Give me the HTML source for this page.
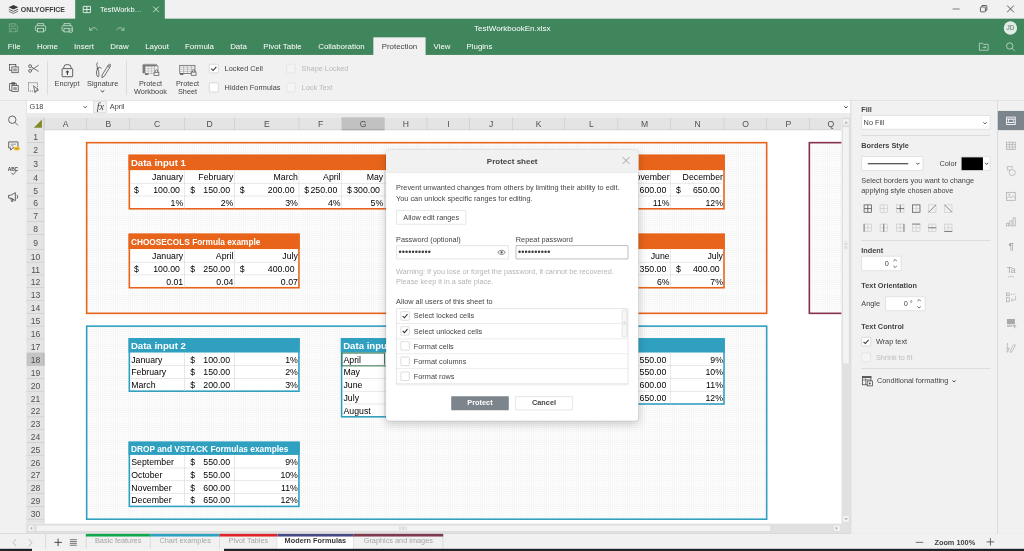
<!DOCTYPE html>
<html lang="en"><head><meta charset="utf-8"><title>TestWorkbookEn.xlsx - Protect sheet</title>
<style>
html,body{margin:0;padding:0;background:#f1f1f1;overflow:hidden;width:1024px;height:551px}
#stage{position:absolute;left:0;top:0;width:1920px;height:1036px;transform:scale(0.5333333);transform-origin:0 0;overflow:hidden;font-family:"Liberation Sans",sans-serif;background:#f1f1f1}
#stage div,#stage svg{position:absolute;box-sizing:border-box}
#stage svg{overflow:visible}
#stage{filter:opacity(1)}
</style></head><body><div id="stage">
<div style="left:0px;top:0px;width:1920px;height:35.01px;background:#f1f1f1"></div>
<svg style="left:13.12px;top:5.62px;" width="26.25" height="24.38" viewBox="7 3 14 13"><path d="M13.5 4.7L18.4 7 13.5 9.3 8.6 7z" fill="#3a3a3a"/><g fill="none" stroke="#3a3a3a" stroke-width="0.8"><path d="M8.9 9.1l4.6 2.1 4.6-2.1"/><path d="M8.9 11.1l4.6 2.1 4.6-2.1" stroke="#555"/></g></svg>
<div style="font-size:14.25px;line-height:19.95px;color:#3a3a3a;white-space:nowrap;font-weight:bold;left:39.38px;top:7.84px;height:19.95px;transform:scaleX(.915);transform-origin:0 50%">ONLYOFFICE</div>
<div style="left:140.62px;top:0px;width:168.75px;height:35.62px;background:#40865c"></div>
<svg style="left:155.44px;top:10.69px;" width="15.75" height="13.69" viewBox="0 0 16 14"><g fill="none" stroke="#fff" stroke-width="1.5"><rect x="1" y="1" width="14" height="12" rx="0.3"/><path d="M1 7h14M8 1v12"/></g></svg>
<div style="font-size:13.74px;line-height:19.24px;color:#fff;white-space:nowrap;left:187.5px;top:8.38px;height:19.24px;">TestWorkb<span style="opacity:.7">…</span></div>
<svg style="left:285.94px;top:10.88px;" width="13.12" height="13.12" viewBox="0 0 10 10"><path d="M1 1l8 8M9 1l-8 8" stroke="#e6efe9" stroke-width="1.2" fill="none"/></svg>
<svg style="left:1786.12px;top:15px;" width="13.5" height="3.75" viewBox="0 0 10 2"><path d="M0 1h10" stroke="#777" stroke-width="1.3"/></svg>
<svg style="left:1836.75px;top:9.19px;" width="14.62" height="14.62" viewBox="0 0 11 11"><g fill="none" stroke="#4a4a4a" stroke-width="1.2"><rect x="1" y="3" width="7" height="7" rx="1"/><path d="M3 3V1.6Q3 1 3.6 1H9.4Q10 1 10 1.6V7.4Q10 8 9.4 8H8"/></g></svg>
<svg style="left:1887.38px;top:8.62px;" width="15.37" height="15.37" viewBox="0 0 11 11"><path d="M1 1l9 9M10 1l-9 9" stroke="#3a3a3a" stroke-width="1.1" fill="none"/></svg>
<div style="left:0px;top:34.69px;width:1920px;height:68.81px;background:#40865c"></div>
<svg style="left:15.37px;top:42.19px;opacity:.55" width="20.06" height="20.06" viewBox="0 0 20 20"><g stroke="#fff" stroke-opacity=".62" fill="none" stroke-width="1.3"><path d="M2.5 2.5h11l4 4v11h-15z"/><path d="M6 2.5v5h7v-5M5.5 17.5v-6h9v6"/></g></svg>
<svg style="left:56.25px;top:35.62px;" width="187.5" height="33.75" viewBox="30 19 100 18"><g stroke="#fff" fill="none" stroke-width="0.75" stroke-opacity=".78">
<path d="M37.5 25.5v-2.1h6.3v2.1"/>
<rect x="35.5" y="25.5" width="10.3" height="5.2" rx="1.3"/>
<rect x="37.5" y="28.1" width="6.3" height="3.6" fill="#40865c" fill-opacity="1"/>
<path d="M64.1 25.5v-2.1h6.3v2.1"/>
<rect x="62.1" y="25.5" width="10.3" height="5.2" rx="1.3"/>
<rect x="64.1" y="28.1" width="5.2" height="3.6" fill="#40865c"/>
<circle cx="70.9" cy="30.4" r="1.9" fill="#40865c"/>
<path d="M70 30.4l0.7 0.7 1.2-1.3" stroke-width="0.6"/>
</g>
<g stroke="#fff" fill="none" stroke-width="0.95" stroke-opacity=".5">
<path d="M89.6 27.1l0.2 3.1 3-0.5"/><path d="M90.2 29.8Q93.6 25 97.5 29.8"/>
<path d="M124.3 27.1l-0.2 3.1-3-0.5"/><path d="M123.7 29.8Q120.3 25 116.4 29.8"/>
</g></svg>
<div style="font-size:15px;line-height:21px;color:#fff;white-space:nowrap;left:773.06px;width:375px;text-align:center;top:42.75px;height:21px;">TestWorkbookEn.xlsx</div>
<div style="left:1881.56px;top:40.31px;width:25.12px;height:25.12px;background:#e3ede7;border-radius:50%"></div>
<div style="font-size:12.19px;line-height:17.06px;color:#7c9a89;white-space:nowrap;font-weight:bold;left:1875.56px;width:37.5px;text-align:center;top:44.34px;height:17.06px;letter-spacing:-0.2px">JD</div>
<div style="left:699.94px;top:69.75px;width:98.25px;height:34.69px;background:#f1f1f1"></div>
<div style="font-size:14.81px;line-height:20.74px;color:#fff;white-space:nowrap;left:-48.38px;width:150px;text-align:center;top:76.63px;height:20.74px;">File</div>
<div style="font-size:14.81px;line-height:20.74px;color:#fff;white-space:nowrap;left:14.06px;width:150px;text-align:center;top:76.63px;height:20.74px;">Home</div>
<div style="font-size:14.81px;line-height:20.74px;color:#fff;white-space:nowrap;left:82.5px;width:150px;text-align:center;top:76.63px;height:20.74px;">Insert</div>
<div style="font-size:14.81px;line-height:20.74px;color:#fff;white-space:nowrap;left:149.06px;width:150px;text-align:center;top:76.63px;height:20.74px;">Draw</div>
<div style="font-size:14.81px;line-height:20.74px;color:#fff;white-space:nowrap;left:219.38px;width:150px;text-align:center;top:76.63px;height:20.74px;">Layout</div>
<div style="font-size:14.81px;line-height:20.74px;color:#fff;white-space:nowrap;left:299.06px;width:150px;text-align:center;top:76.63px;height:20.74px;">Formula</div>
<div style="font-size:14.81px;line-height:20.74px;color:#fff;white-space:nowrap;left:372.19px;width:150px;text-align:center;top:76.63px;height:20.74px;">Data</div>
<div style="font-size:14.81px;line-height:20.74px;color:#fff;white-space:nowrap;left:454.69px;width:150px;text-align:center;top:76.63px;height:20.74px;">Pivot Table</div>
<div style="font-size:14.81px;line-height:20.74px;color:#fff;white-space:nowrap;left:565.31px;width:150px;text-align:center;top:76.63px;height:20.74px;">Collaboration</div>
<div style="font-size:14.81px;line-height:20.74px;color:#444;white-space:nowrap;left:674.06px;width:150px;text-align:center;top:76.63px;height:20.74px;">Protection</div>
<div style="font-size:14.81px;line-height:20.74px;color:#fff;white-space:nowrap;left:753.75px;width:150px;text-align:center;top:76.63px;height:20.74px;">View</div>
<div style="font-size:14.81px;line-height:20.74px;color:#fff;white-space:nowrap;left:824.06px;width:150px;text-align:center;top:76.63px;height:20.74px;">Plugins</div>
<svg style="left:1833.38px;top:76.12px;" width="23.25" height="22.12" viewBox="0 0 20 20"><g stroke="#fff" stroke-opacity=".7" fill="none" stroke-width="1.3"><path d="M2.5 4.5h5l2 2h8v10h-15z"/><path d="M8 11.5h5.5M11.5 9.5l2 2-2 2"/></g></svg>
<svg style="left:1883.62px;top:76.69px;" width="21.75" height="21.75" viewBox="0 0 20 20"><g stroke="#fff" stroke-opacity=".7" fill="none" stroke-width="1.4"><circle cx="8.5" cy="8.5" r="5.5"/><path d="M12.5 12.5l5 5"/></g></svg>
<div style="left:0px;top:103.5px;width:1920px;height:85.22px;background:#f1f1f1;border-bottom:1px solid #cbcbcb"></div>
<svg style="left:0px;top:105px;" width="90" height="82.5" viewBox="0 56 48 44"><g stroke="#444" fill="none" stroke-width="0.75">
<rect x="9.5" y="64.4" width="6.3" height="5.8"/>
<rect x="11.9" y="66.9" width="6.3" height="5.8" fill="#f1f1f1"/>
<rect x="13.3" y="68.4" width="3.5" height="2.9" fill="#9a9a9a" stroke="none"/>
<circle cx="30.1" cy="66.1" r="1.45"/><circle cx="30.1" cy="70.9" r="1.45"/>
<path d="M31.3 66.9L38.6 71.4M31.3 70.1L38.6 65.2"/>
<path d="M11.6 83.6H9.5V90.4H11.9"/><path d="M11.7 82.7h3.2v1.5h-3.2z" fill="#666"/><path d="M14.8 83.6h1.6v1.6"/>
<rect x="11.9" y="85.5" width="6.3" height="6.1" fill="#f1f1f1"/>
<rect x="13.3" y="87.1" width="3.5" height="3" fill="#9a9a9a" stroke="none"/>
<rect x="28.5" y="82.7" width="9" height="8.4" stroke-dasharray="1.1 0.9" stroke-width="0.7"/>
<path d="M33.6 85.8l4.9 4.2-2.3.3-1.1 2.4z" fill="#f1f1f1" stroke-width="0.7"/>
</g></svg>
<div style="left:88.69px;top:114.38px;width:1.03px;height:64.12px;background:#cbcbcb"></div>
<svg style="left:105px;top:108.75px;" width="45" height="41.25" viewBox="56 58 24 22"><g stroke="#444" fill="none" stroke-width="0.85">
<path d="M63.7 68.3V67.4A3.7 3.1 0 0 1 71.1 67.4V68.3"/>
<rect x="62.1" y="68.5" width="10.6" height="8.1" rx="0.6"/>
<path d="M67.4 71.2V74.8" stroke-width="1.1"/><path d="M65.9 72l1.5-1.6 1.5 1.6z" fill="#444" stroke-width="0.5"/>
</g></svg>
<div style="font-size:13.74px;line-height:19.24px;color:#444444;white-space:nowrap;left:69.38px;width:112.5px;text-align:center;top:147.88px;height:19.24px;">Encrypt</div>
<svg style="left:172.5px;top:108.75px;" width="45" height="41.25" viewBox="92 58 24 22"><g stroke="#444" fill="none" stroke-width="0.75">
<path d="M97.3 62.3Q95.6 63.2 97.2 67.6Q98.9 72 98.7 75.3Q98.4 77.3 97.2 76.4Q95.7 74.6 96.4 70.8Q96.9 68.4 99.3 67.2L101.3 68.2"/>
<path d="M96.3 68.6l2.6-1.2"/>
<path d="M108.3 64.6l2 1.2-6.3 10.4-2.4 1.3.3-2.7z"/>
<path d="M107.4 66l2 1.2M109.1 63.9l1.6 1"/>
</g></svg>
<div style="font-size:13.74px;line-height:19.24px;color:#444444;white-space:nowrap;left:136.31px;width:112.5px;text-align:center;top:147.88px;height:19.24px;">Signature</div>
<svg style="left:188.44px;top:168px;" width="8.62" height="6" viewBox="0 0 8 5"><path d="M1 1l3 3 3-3" stroke="#333" fill="none" stroke-width="1.7"/></svg>
<div style="left:236.81px;top:114.38px;width:1.03px;height:64.12px;background:#cbcbcb"></div>
<svg style="left:262.5px;top:108.75px;" width="41.25" height="41.25" viewBox="140 58 22 22"><g stroke="#555" fill="none" stroke-width="0.7">
<path d="M142.4 65.1l1.4-0.9h12.3l1.6 1.6v6.5" stroke="#777"/>
<path d="M142.3 64.5h13.6l1.9 1.7h-12.9v6.9h-2.6z" fill="#7a7a7a" stroke="none"/>
<rect x="144.9" y="66.2" width="9.6" height="6.9" fill="#f6f6f6" stroke="#8a8a8a" stroke-width="0.5"/>
<path d="M144.9 68.5h9.6M144.9 70.8h9.6M148.1 66.2v6.9M151.3 66.2v6.9" stroke="#a8a8a8" stroke-width="0.5"/>
<path d="M144.7 73.9h3.4" stroke="#444" stroke-width="1.3"/>
<rect x="153.8" y="72.2" width="4.8" height="3.2" fill="#f1f1f1" stroke="#666" stroke-width="0.8"/>
<path d="M154.9 72.1v-1.2q0-1.2 1.3-1.2q1.3 0 1.3 1.2v1.2" stroke="#666" stroke-width="0.8"/>
</g></svg>
<div style="font-size:13.74px;line-height:19.24px;color:#444444;white-space:nowrap;left:225.94px;width:112.5px;text-align:center;top:147.88px;height:19.24px;">Protect</div>
<div style="font-size:13.74px;line-height:19.24px;color:#444444;white-space:nowrap;left:225.94px;width:112.5px;text-align:center;top:161.75px;height:19.24px;">Workbook</div>
<svg style="left:331.88px;top:108.75px;" width="41.25" height="41.25" viewBox="177 58 22 22"><g stroke="#555" fill="none" stroke-width="0.7">
<rect x="179.7" y="65.2" width="15.2" height="8.1" fill="#f6f6f6"/>
<path d="M179.7 67.1h15.2M179.7 69.2h15.2M179.7 71.3h15.2" stroke="#a0a0a0" stroke-width="0.5"/>
<path d="M183.6 65.2v8.1M187.4 65.2v8.1M191.2 65.2v8.1" stroke="#8a8a8a" stroke-width="0.5"/>
<path d="M179.9 74h3.4" stroke="#444" stroke-width="1.3"/>
<rect x="191.2" y="72" width="4.8" height="3.2" fill="#f1f1f1" stroke="#666" stroke-width="0.8"/>
<path d="M192.3 71.9v-1.2q0-1.2 1.3-1.2q1.3 0 1.3 1.2v1.2" stroke="#666" stroke-width="0.8"/>
</g></svg>
<div style="font-size:13.74px;line-height:19.24px;color:#444444;white-space:nowrap;left:295.31px;width:112.5px;text-align:center;top:147.88px;height:19.24px;">Protect</div>
<div style="font-size:13.74px;line-height:19.24px;color:#444444;white-space:nowrap;left:295.31px;width:112.5px;text-align:center;top:161.75px;height:19.24px;">Sheet</div>
<div style="left:392.44px;top:120px;width:17.49px;height:17.49px;background:#fff;border:1px solid #c0c0c0;border-radius:2px"></div>
<svg style="left:392.44px;top:120px;" width="17.49" height="17.49" viewBox="0 0 14 14"><path d="M3.3 7.1l2.7 2.7 4.9-5.6" stroke="#333" stroke-width="1.6" fill="none"/></svg>
<div style="font-size:13.74px;line-height:19.24px;color:#444444;white-space:nowrap;left:421.12px;top:119.57px;height:19.24px;">Locked Cell</div>
<div style="left:392.44px;top:155.06px;width:17.49px;height:17.49px;background:#fff;border:1px solid #c0c0c0;border-radius:2px"></div>
<div style="font-size:13.74px;line-height:19.24px;color:#444444;white-space:nowrap;left:421.12px;top:154.44px;height:19.24px;">Hidden Formulas</div>
<div style="left:536.81px;top:120px;width:17.49px;height:17.49px;background:#f4f4f4;border:1px solid #dcdcdc;border-radius:2px"></div>
<div style="font-size:13.74px;line-height:19.24px;color:#b8b8b8;white-space:nowrap;left:565.5px;top:119.57px;height:19.24px;">Shape Locked</div>
<div style="left:536.81px;top:155.06px;width:17.49px;height:17.49px;background:#f4f4f4;border:1px solid #dcdcdc;border-radius:2px"></div>
<div style="font-size:13.74px;line-height:19.24px;color:#b8b8b8;white-space:nowrap;left:565.5px;top:154.44px;height:19.24px;">Lock Text</div>
<div style="left:0px;top:188.72px;width:1920px;height:31.13px;background:#ebebeb"></div>
<div style="left:50.44px;top:189.19px;width:1543.69px;height:22.5px;background:#fff"></div>
<div style="left:174.56px;top:188.81px;width:26.62px;height:23.44px;background:#ebebeb"></div>
<div style="left:175.12px;top:188.81px;width:25.12px;height:23.44px;background:#f1f1f1;border:1px solid #d0d0d0"></div>
<div style="font-size:13.74px;line-height:19.24px;color:#444444;white-space:nowrap;left:55.31px;top:191.19px;height:19.24px;">G18</div>
<svg style="left:156px;top:198.38px;" width="7.88" height="5.62" viewBox="0 0 8 5"><path d="M1 1l3 3 3-3" stroke="#3a3a3a" fill="none" stroke-width="1.75"/></svg>
<div style="font-size:19.12px;line-height:26.77px;color:#444;white-space:nowrap;font-family:&quot;Liberation Serif&quot;,serif;left:174.94px;width:26.25px;text-align:center;top:187.24px;height:26.77px;font-style:italic;letter-spacing:-0.2px">fx</div>
<div style="font-size:13.74px;line-height:19.24px;color:#444444;white-space:nowrap;left:205.88px;top:191.19px;height:19.24px;">April</div>
<svg style="left:1581.56px;top:197.62px;" width="8.25" height="5.81" viewBox="0 0 8 5"><path d="M1 1l3 3 3-3" stroke="#3a3a3a" fill="none" stroke-width="1.75"/></svg>
<div style="left:0px;top:188.72px;width:50.06px;height:812.44px;background:#f1f1f1;border-right:1px solid #dcdcdc"></div>
<svg style="left:7.5px;top:210px;" width="37.5" height="180" viewBox="4 112 20 96"><g stroke="#444" fill="none" stroke-width="0.8">
<circle cx="12" cy="119.7" r="3.7"/><path d="M14.7 122.4l3 3"/>
<path d="M8.4 141.9h9.3v6h-5l-2.3 2.2v-2.2h-2z"/><path d="M10.4 144.2h5.4M10.4 145.9h3" stroke-width="0.5"/>
<rect x="13.9" y="146.9" width="5.5" height="3.5" fill="#f7c62c" stroke="none"/><path d="M15 148.7h3.3" stroke="#7a6a28" stroke-width="0.7"/>
<path d="M11 172.7l1.9 1.9 3.6-4.2"/>
<path d="M8.3 195.3h2.2l4.6-2.6v8l-4.6-2.6h-2.2z"/><path d="M10.5 198.2l0.8 3.2h1.5l-0.6-3"/><path d="M16.6 194.8Q18.3 196.8 16.6 198.8"/>
</g></svg>
<div style="font-size:9.19px;line-height:12.86px;color:#444;white-space:nowrap;font-weight:bold;left:5.44px;width:37.5px;text-align:center;top:311.01px;height:12.86px;letter-spacing:-0.3px">ABC</div>
<div style="left:50.49px;top:219.51px;width:1527.13px;height:762.81px;background:#fff"></div>
<div style="left:0;top:0;width:1577.62px;height:982.31px;overflow:hidden">
<div style="left:50.49px;top:219.51px;width:1527.13px;height:24px;background:#e4e4e4;border-bottom:1px solid #c6c6c6"></div>
<div style="left:50.49px;top:219.51px;width:32.06px;height:762.81px;background:#e4e4e4;border-right:1px solid #c6c6c6"></div>
<div style="left:641.01px;top:219.51px;width:80px;height:24px;background:#c1c1c1;border-bottom:1px solid #8a8a8a"></div>
<div style="left:50.49px;top:662.13px;width:32.06px;height:24px;background:#c4c4c4;border-right:1px solid #9a9a9a"></div>
<svg style="left:63.19px;top:224.06px;" width="15.94" height="15.37" viewBox="0 0 10 10"><path d="M10 0V10H0z" fill="#858a2a"/></svg>
<div style="left:162.01px;top:219.51px;width:1.03px;height:24px;background:#c6c6c6"></div>
<div style="font-size:16.12px;line-height:22.57px;color:#505050;white-space:nowrap;left:94.88px;width:56.25px;text-align:center;top:221.16px;height:22.57px;">A</div>
<div style="left:242.01px;top:219.51px;width:1.03px;height:24px;background:#c6c6c6"></div>
<div style="font-size:16.12px;line-height:22.57px;color:#505050;white-space:nowrap;left:174.88px;width:56.25px;text-align:center;top:221.16px;height:22.57px;">B</div>
<div style="left:345.01px;top:219.51px;width:1.03px;height:24px;background:#c6c6c6"></div>
<div style="font-size:16.12px;line-height:22.57px;color:#505050;white-space:nowrap;left:266.38px;width:56.25px;text-align:center;top:221.16px;height:22.57px;">C</div>
<div style="left:439.01px;top:219.51px;width:1.03px;height:24px;background:#c6c6c6"></div>
<div style="font-size:16.12px;line-height:22.57px;color:#505050;white-space:nowrap;left:364.88px;width:56.25px;text-align:center;top:221.16px;height:22.57px;">D</div>
<div style="left:560.01px;top:219.51px;width:1.03px;height:24px;background:#c6c6c6"></div>
<div style="font-size:16.12px;line-height:22.57px;color:#505050;white-space:nowrap;left:472.38px;width:56.25px;text-align:center;top:221.16px;height:22.57px;">E</div>
<div style="left:640.01px;top:219.51px;width:1.03px;height:24px;background:#c6c6c6"></div>
<div style="font-size:16.12px;line-height:22.57px;color:#505050;white-space:nowrap;left:572.88px;width:56.25px;text-align:center;top:221.16px;height:22.57px;">F</div>
<div style="left:720.01px;top:219.51px;width:1.03px;height:24px;background:#c6c6c6"></div>
<div style="font-size:16.12px;line-height:22.57px;color:#505050;white-space:nowrap;left:652.88px;width:56.25px;text-align:center;top:221.16px;height:22.57px;">G</div>
<div style="left:800.01px;top:219.51px;width:1.03px;height:24px;background:#c6c6c6"></div>
<div style="font-size:16.12px;line-height:22.57px;color:#505050;white-space:nowrap;left:732.88px;width:56.25px;text-align:center;top:221.16px;height:22.57px;">H</div>
<div style="left:880.01px;top:219.51px;width:1.03px;height:24px;background:#c6c6c6"></div>
<div style="font-size:16.12px;line-height:22.57px;color:#505050;white-space:nowrap;left:812.88px;width:56.25px;text-align:center;top:221.16px;height:22.57px;">I</div>
<div style="left:960.01px;top:219.51px;width:1.03px;height:24px;background:#c6c6c6"></div>
<div style="font-size:16.12px;line-height:22.57px;color:#505050;white-space:nowrap;left:892.88px;width:56.25px;text-align:center;top:221.16px;height:22.57px;">J</div>
<div style="left:1058.01px;top:219.51px;width:1.03px;height:24px;background:#c6c6c6"></div>
<div style="font-size:16.12px;line-height:22.57px;color:#505050;white-space:nowrap;left:981.88px;width:56.25px;text-align:center;top:221.16px;height:22.57px;">K</div>
<div style="left:1158.01px;top:219.51px;width:1.03px;height:24px;background:#c6c6c6"></div>
<div style="font-size:16.12px;line-height:22.57px;color:#505050;white-space:nowrap;left:1080.88px;width:56.25px;text-align:center;top:221.16px;height:22.57px;">L</div>
<div style="left:1257.01px;top:219.51px;width:1.03px;height:24px;background:#c6c6c6"></div>
<div style="font-size:16.12px;line-height:22.57px;color:#505050;white-space:nowrap;left:1180.38px;width:56.25px;text-align:center;top:221.16px;height:22.57px;">M</div>
<div style="left:1357.01px;top:219.51px;width:1.03px;height:24px;background:#c6c6c6"></div>
<div style="font-size:16.12px;line-height:22.57px;color:#505050;white-space:nowrap;left:1279.88px;width:56.25px;text-align:center;top:221.16px;height:22.57px;">N</div>
<div style="left:1437.01px;top:219.51px;width:1.03px;height:24px;background:#c6c6c6"></div>
<div style="font-size:16.12px;line-height:22.57px;color:#505050;white-space:nowrap;left:1369.88px;width:56.25px;text-align:center;top:221.16px;height:22.57px;">O</div>
<div style="left:1517.01px;top:219.51px;width:1.03px;height:24px;background:#c6c6c6"></div>
<div style="font-size:16.12px;line-height:22.57px;color:#505050;white-space:nowrap;left:1449.88px;width:56.25px;text-align:center;top:221.16px;height:22.57px;">P</div>
<div style="left:1597.01px;top:219.51px;width:1.03px;height:24px;background:#c6c6c6"></div>
<div style="font-size:16.12px;line-height:22.57px;color:#505050;white-space:nowrap;left:1529.88px;width:56.25px;text-align:center;top:221.16px;height:22.57px;">Q</div>
<div style="left:82.01px;top:219.51px;width:1.03px;height:24px;background:#c6c6c6"></div>
<div style="left:50.49px;top:267.13px;width:32.06px;height:1.03px;background:#c6c6c6"></div>
<div style="font-size:16.12px;line-height:22.57px;color:#505050;white-space:nowrap;left:50.87px;width:31.88px;text-align:center;top:245.77px;height:22.57px;">1</div>
<div style="left:50.49px;top:291.13px;width:32.06px;height:1.03px;background:#c6c6c6"></div>
<div style="font-size:16.12px;line-height:22.57px;color:#505050;white-space:nowrap;left:50.87px;width:31.88px;text-align:center;top:269.77px;height:22.57px;">2</div>
<div style="left:50.49px;top:319.13px;width:32.06px;height:1.03px;background:#c6c6c6"></div>
<div style="font-size:16.12px;line-height:22.57px;color:#505050;white-space:nowrap;left:50.87px;width:31.88px;text-align:center;top:295.77px;height:22.57px;">3</div>
<div style="left:50.49px;top:343.13px;width:32.06px;height:1.03px;background:#c6c6c6"></div>
<div style="font-size:16.12px;line-height:22.57px;color:#505050;white-space:nowrap;left:50.87px;width:31.88px;text-align:center;top:321.78px;height:22.57px;">4</div>
<div style="left:50.49px;top:367.13px;width:32.06px;height:1.03px;background:#c6c6c6"></div>
<div style="font-size:16.12px;line-height:22.57px;color:#505050;white-space:nowrap;left:50.87px;width:31.88px;text-align:center;top:345.78px;height:22.57px;">5</div>
<div style="left:50.49px;top:391.13px;width:32.06px;height:1.03px;background:#c6c6c6"></div>
<div style="font-size:16.12px;line-height:22.57px;color:#505050;white-space:nowrap;left:50.87px;width:31.88px;text-align:center;top:369.78px;height:22.57px;">6</div>
<div style="left:50.49px;top:415.13px;width:32.06px;height:1.03px;background:#c6c6c6"></div>
<div style="font-size:16.12px;line-height:22.57px;color:#505050;white-space:nowrap;left:50.87px;width:31.88px;text-align:center;top:393.78px;height:22.57px;">7</div>
<div style="left:50.49px;top:439.13px;width:32.06px;height:1.03px;background:#c6c6c6"></div>
<div style="font-size:16.12px;line-height:22.57px;color:#505050;white-space:nowrap;left:50.87px;width:31.88px;text-align:center;top:417.78px;height:22.57px;">8</div>
<div style="left:50.49px;top:467.13px;width:32.06px;height:1.03px;background:#c6c6c6"></div>
<div style="font-size:16.12px;line-height:22.57px;color:#505050;white-space:nowrap;left:50.87px;width:31.88px;text-align:center;top:443.78px;height:22.57px;">9</div>
<div style="left:50.49px;top:491.13px;width:32.06px;height:1.03px;background:#c6c6c6"></div>
<div style="font-size:16.12px;line-height:22.57px;color:#505050;white-space:nowrap;left:50.87px;width:31.88px;text-align:center;top:469.78px;height:22.57px;">10</div>
<div style="left:50.49px;top:515.13px;width:32.06px;height:1.03px;background:#c6c6c6"></div>
<div style="font-size:16.12px;line-height:22.57px;color:#505050;white-space:nowrap;left:50.87px;width:31.88px;text-align:center;top:493.78px;height:22.57px;">11</div>
<div style="left:50.49px;top:539.13px;width:32.06px;height:1.03px;background:#c6c6c6"></div>
<div style="font-size:16.12px;line-height:22.57px;color:#505050;white-space:nowrap;left:50.87px;width:31.88px;text-align:center;top:517.78px;height:22.57px;">12</div>
<div style="left:50.49px;top:563.13px;width:32.06px;height:1.03px;background:#c6c6c6"></div>
<div style="font-size:16.12px;line-height:22.57px;color:#505050;white-space:nowrap;left:50.87px;width:31.88px;text-align:center;top:541.78px;height:22.57px;">13</div>
<div style="left:50.49px;top:587.13px;width:32.06px;height:1.03px;background:#c6c6c6"></div>
<div style="font-size:16.12px;line-height:22.57px;color:#505050;white-space:nowrap;left:50.87px;width:31.88px;text-align:center;top:565.78px;height:22.57px;">14</div>
<div style="left:50.49px;top:611.13px;width:32.06px;height:1.03px;background:#c6c6c6"></div>
<div style="font-size:16.12px;line-height:22.57px;color:#505050;white-space:nowrap;left:50.87px;width:31.88px;text-align:center;top:589.78px;height:22.57px;">15</div>
<div style="left:50.49px;top:635.13px;width:32.06px;height:1.03px;background:#c6c6c6"></div>
<div style="font-size:16.12px;line-height:22.57px;color:#505050;white-space:nowrap;left:50.87px;width:31.88px;text-align:center;top:613.78px;height:22.57px;">16</div>
<div style="left:50.49px;top:661.13px;width:32.06px;height:1.03px;background:#c6c6c6"></div>
<div style="font-size:16.12px;line-height:22.57px;color:#505050;white-space:nowrap;left:50.87px;width:31.88px;text-align:center;top:638.78px;height:22.57px;">17</div>
<div style="left:50.49px;top:685.13px;width:32.06px;height:1.03px;background:#c6c6c6"></div>
<div style="font-size:16.12px;line-height:22.57px;color:#505050;white-space:nowrap;left:50.87px;width:31.88px;text-align:center;top:663.78px;height:22.57px;">18</div>
<div style="left:50.49px;top:709.13px;width:32.06px;height:1.03px;background:#c6c6c6"></div>
<div style="font-size:16.12px;line-height:22.57px;color:#505050;white-space:nowrap;left:50.87px;width:31.88px;text-align:center;top:687.78px;height:22.57px;">19</div>
<div style="left:50.49px;top:733.13px;width:32.06px;height:1.03px;background:#c6c6c6"></div>
<div style="font-size:16.12px;line-height:22.57px;color:#505050;white-space:nowrap;left:50.87px;width:31.88px;text-align:center;top:711.78px;height:22.57px;">20</div>
<div style="left:50.49px;top:757.13px;width:32.06px;height:1.03px;background:#c6c6c6"></div>
<div style="font-size:16.12px;line-height:22.57px;color:#505050;white-space:nowrap;left:50.87px;width:31.88px;text-align:center;top:735.78px;height:22.57px;">21</div>
<div style="left:50.49px;top:781.13px;width:32.06px;height:1.03px;background:#c6c6c6"></div>
<div style="font-size:16.12px;line-height:22.57px;color:#505050;white-space:nowrap;left:50.87px;width:31.88px;text-align:center;top:759.78px;height:22.57px;">22</div>
<div style="left:50.49px;top:805.13px;width:32.06px;height:1.03px;background:#c6c6c6"></div>
<div style="font-size:16.12px;line-height:22.57px;color:#505050;white-space:nowrap;left:50.87px;width:31.88px;text-align:center;top:783.78px;height:22.57px;">23</div>
<div style="left:50.49px;top:829.13px;width:32.06px;height:1.03px;background:#c6c6c6"></div>
<div style="font-size:16.12px;line-height:22.57px;color:#505050;white-space:nowrap;left:50.87px;width:31.88px;text-align:center;top:807.78px;height:22.57px;">24</div>
<div style="left:50.49px;top:853.13px;width:32.06px;height:1.03px;background:#c6c6c6"></div>
<div style="font-size:16.12px;line-height:22.57px;color:#505050;white-space:nowrap;left:50.87px;width:31.88px;text-align:center;top:831.78px;height:22.57px;">25</div>
<div style="left:50.49px;top:877.13px;width:32.06px;height:1.03px;background:#c6c6c6"></div>
<div style="font-size:16.12px;line-height:22.57px;color:#505050;white-space:nowrap;left:50.87px;width:31.88px;text-align:center;top:855.78px;height:22.57px;">26</div>
<div style="left:50.49px;top:901.13px;width:32.06px;height:1.03px;background:#c6c6c6"></div>
<div style="font-size:16.12px;line-height:22.57px;color:#505050;white-space:nowrap;left:50.87px;width:31.88px;text-align:center;top:879.78px;height:22.57px;">27</div>
<div style="left:50.49px;top:925.13px;width:32.06px;height:1.03px;background:#c6c6c6"></div>
<div style="font-size:16.12px;line-height:22.57px;color:#505050;white-space:nowrap;left:50.87px;width:31.88px;text-align:center;top:903.78px;height:22.57px;">28</div>
<div style="left:50.49px;top:949.13px;width:32.06px;height:1.03px;background:#c6c6c6"></div>
<div style="font-size:16.12px;line-height:22.57px;color:#505050;white-space:nowrap;left:50.87px;width:31.88px;text-align:center;top:927.78px;height:22.57px;">29</div>
<div style="left:50.49px;top:973.13px;width:32.06px;height:1.03px;background:#c6c6c6"></div>
<div style="font-size:16.12px;line-height:22.57px;color:#505050;white-space:nowrap;left:50.87px;width:31.88px;text-align:center;top:951.78px;height:22.57px;">30</div>
<div style="left:50.49px;top:997.13px;width:32.06px;height:1.03px;background:#c6c6c6"></div>
<div style="font-size:16.12px;line-height:22.57px;color:#505050;white-space:nowrap;left:50.87px;width:31.88px;text-align:center;top:975.78px;height:22.57px;clip-path:inset(0 0 13.75px 0);">31</div>
<div style="left:160.94px;top:266.06px;width:1278px;height:323px;background-color:#fff;background-image:linear-gradient(#f5f5f5 2px,transparent 2px),linear-gradient(90deg,#f5f5f5 2px,transparent 2px);background-size:4px 4px;background-clip:padding-box;border:3px solid #e8641b"></div>
<div style="left:160.94px;top:610.06px;width:1278px;height:365px;background-color:#fff;background-image:linear-gradient(#f5f5f5 2px,transparent 2px),linear-gradient(90deg,#f5f5f5 2px,transparent 2px);background-size:4px 4px;background-clip:padding-box;border:3px solid #30a0c1"></div>
<div style="left:1515.94px;top:266.06px;width:112.5px;height:323px;background-color:#fff;background-image:linear-gradient(#f5f5f5 2px,transparent 2px),linear-gradient(90deg,#f5f5f5 2px,transparent 2px);background-size:4px 4px;background-clip:padding-box;border:3px solid #86304f"></div>
<div style="left:240.94px;top:290.06px;width:1118px;height:103px;background:#fff;background-clip:padding-box;border:3px solid #e8641b"></div>
<div style="left:240.94px;top:290.06px;width:1118px;height:28.94px;background:#e8641b"></div>
<div style="font-size:18px;line-height:25.2px;color:#fff;white-space:nowrap;font-weight:bold;left:245.44px;top:294.09px;height:25.2px;">Data input 1</div>
<div style="left:345.01px;top:320.12px;width:1.03px;height:71.06px;background:#d4d4d4"></div>
<div style="left:439.01px;top:320.12px;width:1.03px;height:71.06px;background:#d4d4d4"></div>
<div style="left:560.01px;top:320.12px;width:1.03px;height:71.06px;background:#d4d4d4"></div>
<div style="left:640.01px;top:320.12px;width:1.03px;height:71.06px;background:#d4d4d4"></div>
<div style="left:720.01px;top:320.12px;width:1.03px;height:71.06px;background:#d4d4d4"></div>
<div style="left:800.01px;top:320.12px;width:1.03px;height:71.06px;background:#d4d4d4"></div>
<div style="left:880.01px;top:320.12px;width:1.03px;height:71.06px;background:#d4d4d4"></div>
<div style="left:960.01px;top:320.12px;width:1.03px;height:71.06px;background:#d4d4d4"></div>
<div style="left:1058.01px;top:320.12px;width:1.03px;height:71.06px;background:#d4d4d4"></div>
<div style="left:1158.01px;top:320.12px;width:1.03px;height:71.06px;background:#d4d4d4"></div>
<div style="left:1257.01px;top:320.12px;width:1.03px;height:71.06px;background:#d4d4d4"></div>
<div style="left:243.94px;top:343.13px;width:1113.13px;height:1.03px;background:#d4d4d4"></div>
<div style="left:243.94px;top:367.13px;width:1113.13px;height:1.03px;background:#d4d4d4"></div>
<div style="font-size:16.41px;line-height:22.97px;color:#000;white-space:nowrap;left:212.32px;width:131.25px;text-align:right;top:321.3px;height:22.97px;">January</div>
<div style="font-size:16.41px;line-height:22.97px;color:#000;white-space:nowrap;left:306.32px;width:131.25px;text-align:right;top:321.3px;height:22.97px;">February</div>
<div style="font-size:16.41px;line-height:22.97px;color:#000;white-space:nowrap;left:427.32px;width:131.25px;text-align:right;top:321.3px;height:22.97px;">March</div>
<div style="font-size:16.41px;line-height:22.97px;color:#000;white-space:nowrap;left:507.32px;width:131.25px;text-align:right;top:321.3px;height:22.97px;">April</div>
<div style="font-size:16.41px;line-height:22.97px;color:#000;white-space:nowrap;left:587.32px;width:131.25px;text-align:right;top:321.3px;height:22.97px;">May</div>
<div style="font-size:16.41px;line-height:22.97px;color:#000;white-space:nowrap;left:1124.32px;width:131.25px;text-align:right;top:321.3px;height:22.97px;">November</div>
<div style="font-size:16.41px;line-height:22.97px;color:#000;white-space:nowrap;left:1224.32px;width:131.25px;text-align:right;top:321.3px;height:22.97px;">December</div>
<div style="font-size:16.41px;line-height:22.97px;color:#000;white-space:nowrap;left:251.07px;top:345.3px;height:22.97px;">$</div>
<div style="font-size:16.41px;line-height:22.97px;color:#000;white-space:nowrap;left:224.88px;width:112.5px;text-align:right;top:345.3px;height:22.97px;">100.00</div>
<div style="font-size:16.41px;line-height:22.97px;color:#000;white-space:nowrap;left:356.51px;top:345.3px;height:22.97px;">$</div>
<div style="font-size:16.41px;line-height:22.97px;color:#000;white-space:nowrap;left:318.88px;width:112.5px;text-align:right;top:345.3px;height:22.97px;">150.00</div>
<div style="font-size:16.41px;line-height:22.97px;color:#000;white-space:nowrap;left:449.57px;top:345.3px;height:22.97px;">$</div>
<div style="font-size:16.41px;line-height:22.97px;color:#000;white-space:nowrap;left:439.88px;width:112.5px;text-align:right;top:345.3px;height:22.97px;">200.00</div>
<div style="font-size:16.41px;line-height:22.97px;color:#000;white-space:nowrap;left:570.57px;top:345.3px;height:22.97px;">$</div>
<div style="font-size:16.41px;line-height:22.97px;color:#000;white-space:nowrap;left:519.88px;width:112.5px;text-align:right;top:345.3px;height:22.97px;">250.00</div>
<div style="font-size:16.41px;line-height:22.97px;color:#000;white-space:nowrap;left:650.57px;top:345.3px;height:22.97px;">$</div>
<div style="font-size:16.41px;line-height:22.97px;color:#000;white-space:nowrap;left:599.88px;width:112.5px;text-align:right;top:345.3px;height:22.97px;">300.00</div>
<div style="font-size:16.41px;line-height:22.97px;color:#000;white-space:nowrap;left:1136.88px;width:112.5px;text-align:right;top:345.3px;height:22.97px;">600.00</div>
<div style="font-size:16.41px;line-height:22.97px;color:#000;white-space:nowrap;left:1267.57px;top:345.3px;height:22.97px;">$</div>
<div style="font-size:16.41px;line-height:22.97px;color:#000;white-space:nowrap;left:1236.88px;width:112.5px;text-align:right;top:345.3px;height:22.97px;">650.00</div>
<div style="font-size:16.41px;line-height:22.97px;color:#000;white-space:nowrap;left:212.32px;width:131.25px;text-align:right;top:369.3px;height:22.97px;">1%</div>
<div style="font-size:16.41px;line-height:22.97px;color:#000;white-space:nowrap;left:306.32px;width:131.25px;text-align:right;top:369.3px;height:22.97px;">2%</div>
<div style="font-size:16.41px;line-height:22.97px;color:#000;white-space:nowrap;left:427.32px;width:131.25px;text-align:right;top:369.3px;height:22.97px;">3%</div>
<div style="font-size:16.41px;line-height:22.97px;color:#000;white-space:nowrap;left:507.32px;width:131.25px;text-align:right;top:369.3px;height:22.97px;">4%</div>
<div style="font-size:16.41px;line-height:22.97px;color:#000;white-space:nowrap;left:587.32px;width:131.25px;text-align:right;top:369.3px;height:22.97px;">5%</div>
<div style="font-size:16.41px;line-height:22.97px;color:#000;white-space:nowrap;left:1124.32px;width:131.25px;text-align:right;top:369.3px;height:22.97px;">11%</div>
<div style="font-size:16.41px;line-height:22.97px;color:#000;white-space:nowrap;left:1224.32px;width:131.25px;text-align:right;top:369.3px;height:22.97px;">12%</div>
<div style="left:240.94px;top:438.06px;width:321px;height:103px;background:#fff;background-clip:padding-box;border:3px solid #e8641b"></div>
<div style="left:240.94px;top:438.06px;width:321px;height:28.94px;background:#e8641b"></div>
<div style="font-size:15.56px;line-height:21.79px;color:#fff;white-space:nowrap;font-weight:bold;left:245.44px;top:443.79px;height:21.79px;">CHOOSECOLS Formula example</div>
<div style="left:345.01px;top:468.13px;width:1.03px;height:71.06px;background:#d4d4d4"></div>
<div style="left:439.01px;top:468.13px;width:1.03px;height:71.06px;background:#d4d4d4"></div>
<div style="left:243.94px;top:491.13px;width:316.12px;height:1.03px;background:#d4d4d4"></div>
<div style="left:243.94px;top:515.13px;width:316.12px;height:1.03px;background:#d4d4d4"></div>
<div style="font-size:16.41px;line-height:22.97px;color:#000;white-space:nowrap;left:212.32px;width:131.25px;text-align:right;top:469.3px;height:22.97px;">January</div>
<div style="font-size:16.41px;line-height:22.97px;color:#000;white-space:nowrap;left:306.32px;width:131.25px;text-align:right;top:469.3px;height:22.97px;">April</div>
<div style="font-size:16.41px;line-height:22.97px;color:#000;white-space:nowrap;left:427.32px;width:131.25px;text-align:right;top:469.3px;height:22.97px;">July</div>
<div style="font-size:16.41px;line-height:22.97px;color:#000;white-space:nowrap;left:251.07px;top:493.3px;height:22.97px;">$</div>
<div style="font-size:16.41px;line-height:22.97px;color:#000;white-space:nowrap;left:224.88px;width:112.5px;text-align:right;top:493.3px;height:22.97px;">100.00</div>
<div style="font-size:16.41px;line-height:22.97px;color:#000;white-space:nowrap;left:356.51px;top:493.3px;height:22.97px;">$</div>
<div style="font-size:16.41px;line-height:22.97px;color:#000;white-space:nowrap;left:318.88px;width:112.5px;text-align:right;top:493.3px;height:22.97px;">250.00</div>
<div style="font-size:16.41px;line-height:22.97px;color:#000;white-space:nowrap;left:449.57px;top:493.3px;height:22.97px;">$</div>
<div style="font-size:16.41px;line-height:22.97px;color:#000;white-space:nowrap;left:439.88px;width:112.5px;text-align:right;top:493.3px;height:22.97px;">400.00</div>
<div style="font-size:16.41px;line-height:22.97px;color:#000;white-space:nowrap;left:212.32px;width:131.25px;text-align:right;top:517.3px;height:22.97px;">0.01</div>
<div style="font-size:16.41px;line-height:22.97px;color:#000;white-space:nowrap;left:306.32px;width:131.25px;text-align:right;top:517.3px;height:22.97px;">0.04</div>
<div style="font-size:16.41px;line-height:22.97px;color:#000;white-space:nowrap;left:427.32px;width:131.25px;text-align:right;top:517.3px;height:22.97px;">0.07</div>
<div style="left:798.94px;top:438.06px;width:560px;height:103px;background:#fff;background-clip:padding-box;border:3px solid #e8641b"></div>
<div style="left:798.94px;top:438.06px;width:560px;height:28.94px;background:#e8641b"></div>
<div style="left:880.01px;top:468.13px;width:1.03px;height:71.06px;background:#d4d4d4"></div>
<div style="left:960.01px;top:468.13px;width:1.03px;height:71.06px;background:#d4d4d4"></div>
<div style="left:1058.01px;top:468.13px;width:1.03px;height:71.06px;background:#d4d4d4"></div>
<div style="left:1158.01px;top:468.13px;width:1.03px;height:71.06px;background:#d4d4d4"></div>
<div style="left:1257.01px;top:468.13px;width:1.03px;height:71.06px;background:#d4d4d4"></div>
<div style="left:801.94px;top:491.13px;width:555.13px;height:1.03px;background:#d4d4d4"></div>
<div style="left:801.94px;top:515.13px;width:555.13px;height:1.03px;background:#d4d4d4"></div>
<div style="font-size:16.41px;line-height:22.97px;color:#000;white-space:nowrap;left:1124.32px;width:131.25px;text-align:right;top:469.3px;height:22.97px;">June</div>
<div style="font-size:16.41px;line-height:22.97px;color:#000;white-space:nowrap;left:1224.32px;width:131.25px;text-align:right;top:469.3px;height:22.97px;">July</div>
<div style="font-size:16.41px;line-height:22.97px;color:#000;white-space:nowrap;left:1136.88px;width:112.5px;text-align:right;top:493.3px;height:22.97px;">350.00</div>
<div style="font-size:16.41px;line-height:22.97px;color:#000;white-space:nowrap;left:1267.57px;top:493.3px;height:22.97px;">$</div>
<div style="font-size:16.41px;line-height:22.97px;color:#000;white-space:nowrap;left:1236.88px;width:112.5px;text-align:right;top:493.3px;height:22.97px;">400.00</div>
<div style="font-size:16.41px;line-height:22.97px;color:#000;white-space:nowrap;left:1124.32px;width:131.25px;text-align:right;top:517.3px;height:22.97px;">6%</div>
<div style="font-size:16.41px;line-height:22.97px;color:#000;white-space:nowrap;left:1224.32px;width:131.25px;text-align:right;top:517.3px;height:22.97px;">7%</div>
<div style="left:240.94px;top:634.06px;width:321px;height:101px;background:#fff;background-clip:padding-box;border:3px solid #30a0c1"></div>
<div style="left:240.94px;top:634.06px;width:321px;height:26.94px;background:#30a0c1"></div>
<div style="font-size:18px;line-height:25.2px;color:#fff;white-space:nowrap;font-weight:bold;left:245.44px;top:637.09px;height:25.2px;">Data input 2</div>
<div style="left:345.01px;top:662.13px;width:1.03px;height:71.06px;background:#d4d4d4"></div>
<div style="left:439.01px;top:662.13px;width:1.03px;height:71.06px;background:#d4d4d4"></div>
<div style="left:243.94px;top:685.13px;width:316.12px;height:1.03px;background:#d4d4d4"></div>
<div style="left:243.94px;top:709.13px;width:316.12px;height:1.03px;background:#d4d4d4"></div>
<div style="font-size:16.41px;line-height:22.97px;color:#000;white-space:nowrap;left:246.01px;top:663.3px;height:22.97px;">January</div>
<div style="font-size:16.41px;line-height:22.97px;color:#000;white-space:nowrap;left:356.51px;top:663.3px;height:22.97px;">$</div>
<div style="font-size:16.41px;line-height:22.97px;color:#000;white-space:nowrap;left:318.88px;width:112.5px;text-align:right;top:663.3px;height:22.97px;">100.00</div>
<div style="font-size:16.41px;line-height:22.97px;color:#000;white-space:nowrap;left:427.32px;width:131.25px;text-align:right;top:663.3px;height:22.97px;">1%</div>
<div style="font-size:16.41px;line-height:22.97px;color:#000;white-space:nowrap;left:246.01px;top:687.3px;height:22.97px;">February</div>
<div style="font-size:16.41px;line-height:22.97px;color:#000;white-space:nowrap;left:356.51px;top:687.3px;height:22.97px;">$</div>
<div style="font-size:16.41px;line-height:22.97px;color:#000;white-space:nowrap;left:318.88px;width:112.5px;text-align:right;top:687.3px;height:22.97px;">150.00</div>
<div style="font-size:16.41px;line-height:22.97px;color:#000;white-space:nowrap;left:427.32px;width:131.25px;text-align:right;top:687.3px;height:22.97px;">2%</div>
<div style="font-size:16.41px;line-height:22.97px;color:#000;white-space:nowrap;left:246.01px;top:711.3px;height:22.97px;">March</div>
<div style="font-size:16.41px;line-height:22.97px;color:#000;white-space:nowrap;left:356.51px;top:711.3px;height:22.97px;">$</div>
<div style="font-size:16.41px;line-height:22.97px;color:#000;white-space:nowrap;left:318.88px;width:112.5px;text-align:right;top:711.3px;height:22.97px;">200.00</div>
<div style="font-size:16.41px;line-height:22.97px;color:#000;white-space:nowrap;left:427.32px;width:131.25px;text-align:right;top:711.3px;height:22.97px;">3%</div>
<div style="left:638.94px;top:634.06px;width:243px;height:149px;background:#fff;background-clip:padding-box;border:3px solid #30a0c1"></div>
<div style="left:638.94px;top:634.06px;width:243px;height:26.94px;background:#30a0c1"></div>
<div style="font-size:18px;line-height:25.2px;color:#fff;white-space:nowrap;font-weight:bold;left:643.44px;top:637.09px;height:25.2px;">Data input 3</div>
<div style="left:720.01px;top:662.13px;width:1.03px;height:119.06px;background:#d4d4d4"></div>
<div style="left:800.01px;top:662.13px;width:1.03px;height:119.06px;background:#d4d4d4"></div>
<div style="left:641.94px;top:685.13px;width:238.13px;height:1.03px;background:#d4d4d4"></div>
<div style="left:641.94px;top:709.13px;width:238.13px;height:1.03px;background:#d4d4d4"></div>
<div style="left:641.94px;top:733.13px;width:238.13px;height:1.03px;background:#d4d4d4"></div>
<div style="left:641.94px;top:757.13px;width:238.13px;height:1.03px;background:#d4d4d4"></div>
<div style="font-size:16.41px;line-height:22.97px;color:#000;white-space:nowrap;left:644.01px;top:663.3px;height:22.97px;">April</div>
<div style="font-size:16.41px;line-height:22.97px;color:#000;white-space:nowrap;left:644.01px;top:687.3px;height:22.97px;">May</div>
<div style="font-size:16.41px;line-height:22.97px;color:#000;white-space:nowrap;left:644.01px;top:711.3px;height:22.97px;">June</div>
<div style="font-size:16.41px;line-height:22.97px;color:#000;white-space:nowrap;left:644.01px;top:735.3px;height:22.97px;">July</div>
<div style="font-size:16.41px;line-height:22.97px;color:#000;white-space:nowrap;left:644.01px;top:759.3px;height:22.97px;">August</div>
<div style="left:958.94px;top:634.06px;width:400px;height:125px;background:#fff;background-clip:padding-box;border:3px solid #30a0c1"></div>
<div style="left:958.94px;top:634.06px;width:400px;height:26.94px;background:#30a0c1"></div>
<div style="left:1058.01px;top:662.13px;width:1.03px;height:95.06px;background:#d4d4d4"></div>
<div style="left:1158.01px;top:662.13px;width:1.03px;height:95.06px;background:#d4d4d4"></div>
<div style="left:1257.01px;top:662.13px;width:1.03px;height:95.06px;background:#d4d4d4"></div>
<div style="left:961.94px;top:685.13px;width:395.12px;height:1.03px;background:#d4d4d4"></div>
<div style="left:961.94px;top:709.13px;width:395.12px;height:1.03px;background:#d4d4d4"></div>
<div style="left:961.94px;top:733.13px;width:395.12px;height:1.03px;background:#d4d4d4"></div>
<div style="font-size:16.41px;line-height:22.97px;color:#000;white-space:nowrap;left:1136.88px;width:112.5px;text-align:right;top:663.3px;height:22.97px;">550.00</div>
<div style="font-size:16.41px;line-height:22.97px;color:#000;white-space:nowrap;left:1224.32px;width:131.25px;text-align:right;top:663.3px;height:22.97px;">9%</div>
<div style="font-size:16.41px;line-height:22.97px;color:#000;white-space:nowrap;left:1136.88px;width:112.5px;text-align:right;top:687.3px;height:22.97px;">550.00</div>
<div style="font-size:16.41px;line-height:22.97px;color:#000;white-space:nowrap;left:1224.32px;width:131.25px;text-align:right;top:687.3px;height:22.97px;">10%</div>
<div style="font-size:16.41px;line-height:22.97px;color:#000;white-space:nowrap;left:1136.88px;width:112.5px;text-align:right;top:711.3px;height:22.97px;">600.00</div>
<div style="font-size:16.41px;line-height:22.97px;color:#000;white-space:nowrap;left:1224.32px;width:131.25px;text-align:right;top:711.3px;height:22.97px;">11%</div>
<div style="font-size:16.41px;line-height:22.97px;color:#000;white-space:nowrap;left:1136.88px;width:112.5px;text-align:right;top:735.3px;height:22.97px;">650.00</div>
<div style="font-size:16.41px;line-height:22.97px;color:#000;white-space:nowrap;left:1224.32px;width:131.25px;text-align:right;top:735.3px;height:22.97px;">12%</div>
<div style="left:240.94px;top:828.06px;width:321px;height:123px;background:#fff;background-clip:padding-box;border:3px solid #30a0c1"></div>
<div style="left:240.94px;top:828.06px;width:321px;height:24.94px;background:#30a0c1"></div>
<div style="font-size:15.66px;line-height:21.92px;color:#fff;white-space:nowrap;font-weight:bold;left:245.44px;top:831.73px;height:21.92px;">DROP and VSTACK Formulas examples</div>
<div style="left:345.01px;top:854.13px;width:1.03px;height:95.06px;background:#d4d4d4"></div>
<div style="left:439.01px;top:854.13px;width:1.03px;height:95.06px;background:#d4d4d4"></div>
<div style="left:243.94px;top:877.13px;width:316.12px;height:1.03px;background:#d4d4d4"></div>
<div style="left:243.94px;top:901.13px;width:316.12px;height:1.03px;background:#d4d4d4"></div>
<div style="left:243.94px;top:925.13px;width:316.12px;height:1.03px;background:#d4d4d4"></div>
<div style="font-size:16.41px;line-height:22.97px;color:#000;white-space:nowrap;left:246.01px;top:855.3px;height:22.97px;">September</div>
<div style="font-size:16.41px;line-height:22.97px;color:#000;white-space:nowrap;left:356.51px;top:855.3px;height:22.97px;">$</div>
<div style="font-size:16.41px;line-height:22.97px;color:#000;white-space:nowrap;left:318.88px;width:112.5px;text-align:right;top:855.3px;height:22.97px;">550.00</div>
<div style="font-size:16.41px;line-height:22.97px;color:#000;white-space:nowrap;left:427.32px;width:131.25px;text-align:right;top:855.3px;height:22.97px;">9%</div>
<div style="font-size:16.41px;line-height:22.97px;color:#000;white-space:nowrap;left:246.01px;top:879.3px;height:22.97px;">October</div>
<div style="font-size:16.41px;line-height:22.97px;color:#000;white-space:nowrap;left:356.51px;top:879.3px;height:22.97px;">$</div>
<div style="font-size:16.41px;line-height:22.97px;color:#000;white-space:nowrap;left:318.88px;width:112.5px;text-align:right;top:879.3px;height:22.97px;">550.00</div>
<div style="font-size:16.41px;line-height:22.97px;color:#000;white-space:nowrap;left:427.32px;width:131.25px;text-align:right;top:879.3px;height:22.97px;">10%</div>
<div style="font-size:16.41px;line-height:22.97px;color:#000;white-space:nowrap;left:246.01px;top:903.3px;height:22.97px;">November</div>
<div style="font-size:16.41px;line-height:22.97px;color:#000;white-space:nowrap;left:356.51px;top:903.3px;height:22.97px;">$</div>
<div style="font-size:16.41px;line-height:22.97px;color:#000;white-space:nowrap;left:318.88px;width:112.5px;text-align:right;top:903.3px;height:22.97px;">600.00</div>
<div style="font-size:16.41px;line-height:22.97px;color:#000;white-space:nowrap;left:427.32px;width:131.25px;text-align:right;top:903.3px;height:22.97px;">11%</div>
<div style="font-size:16.41px;line-height:22.97px;color:#000;white-space:nowrap;left:246.01px;top:927.3px;height:22.97px;">December</div>
<div style="font-size:16.41px;line-height:22.97px;color:#000;white-space:nowrap;left:356.51px;top:927.3px;height:22.97px;">$</div>
<div style="font-size:16.41px;line-height:22.97px;color:#000;white-space:nowrap;left:318.88px;width:112.5px;text-align:right;top:927.3px;height:22.97px;">650.00</div>
<div style="font-size:16.41px;line-height:22.97px;color:#000;white-space:nowrap;left:427.32px;width:131.25px;text-align:right;top:927.3px;height:22.97px;">12%</div>
<div style="left:639.51px;top:660.63px;width:82.06px;height:26.06px;border:2px solid #3f7a56"></div>
<div style="left:718.01px;top:683.13px;width:4.88px;height:4.88px;background:#3f7a56;border:1px solid #fff"></div>
</div>
<div style="left:1577.62px;top:219.51px;width:17.25px;height:781.12px;background:#e1e1e1"></div>
<div style="left:1579.12px;top:222px;width:13.5px;height:14.06px;background:#f3f3f3;border:1px solid #d2d2d2;border-radius:1px"></div>
<svg style="left:1582.5px;top:226.88px;" width="6.75" height="4.5" viewBox="0 0 6 4"><path d="M0 4L3 0.5 6 4z" fill="#adadad"/></svg>
<div style="left:1579.12px;top:237.38px;width:13.5px;height:445.5px;background:#f3f3f3;border:1px solid #d2d2d2;border-radius:1px"></div>
<div style="left:1582.88px;top:453.38px;width:6.19px;height:1.12px;background:#c8c8c8"></div>
<div style="left:1582.88px;top:455.87px;width:6.19px;height:1.12px;background:#c8c8c8"></div>
<div style="left:1582.88px;top:458.36px;width:6.19px;height:1.12px;background:#c8c8c8"></div>
<div style="left:1582.88px;top:460.86px;width:6.19px;height:1.12px;background:#c8c8c8"></div>
<div style="left:1582.88px;top:463.35px;width:6.19px;height:1.12px;background:#c8c8c8"></div>
<div style="left:1582.88px;top:465.84px;width:6.19px;height:1.12px;background:#c8c8c8"></div>
<div style="left:1579.12px;top:966px;width:13.5px;height:14.06px;background:#f3f3f3;border:1px solid #d2d2d2;border-radius:1px"></div>
<svg style="left:1582.5px;top:971.25px;" width="6.75" height="4.5" viewBox="0 0 6 4"><path d="M0 0.5L3 4 6 0.5z" fill="#adadad"/></svg>
<div style="left:50.44px;top:982.31px;width:1527.19px;height:18.38px;background:#e1e1e1"></div>
<div style="left:51.75px;top:983.62px;width:13.5px;height:13.69px;background:#f3f3f3;border:1px solid #d2d2d2;border-radius:1px"></div>
<svg style="left:56.44px;top:987px;" width="4.5" height="6.75" viewBox="0 0 4 6"><path d="M4 0L0.5 3 4 6z" fill="#adadad"/></svg>
<div style="left:66.75px;top:983.62px;width:1379.25px;height:13.69px;background:#f3f3f3;border:1px solid #d2d2d2;border-radius:1px"></div>
<div style="left:748.88px;top:987.38px;width:1.12px;height:6.19px;background:#c8c8c8"></div>
<div style="left:751.37px;top:987.38px;width:1.12px;height:6.19px;background:#c8c8c8"></div>
<div style="left:753.86px;top:987.38px;width:1.12px;height:6.19px;background:#c8c8c8"></div>
<div style="left:756.36px;top:987.38px;width:1.12px;height:6.19px;background:#c8c8c8"></div>
<div style="left:758.85px;top:987.38px;width:1.12px;height:6.19px;background:#c8c8c8"></div>
<div style="left:761.34px;top:987.38px;width:1.12px;height:6.19px;background:#c8c8c8"></div>
<div style="left:1562.25px;top:983.62px;width:13.5px;height:13.69px;background:#f3f3f3;border:1px solid #d2d2d2;border-radius:1px"></div>
<svg style="left:1567.12px;top:987px;" width="4.5" height="6.75" viewBox="0 0 4 6"><path d="M0 0L3.5 3 0 6z" fill="#adadad"/></svg>
<div style="left:0px;top:999.56px;width:1920px;height:33.56px;background:#f1f1f1;border-top:1px solid #cbcbcb"></div>
<svg style="left:22.5px;top:1009.5px;" width="8.25" height="15" viewBox="0 0 5 10"><path d="M4.5 0.5L0.7 5 4.5 9.5" stroke="#b0b0b0" fill="none" stroke-width="1"/></svg>
<svg style="left:52.5px;top:1009.5px;" width="8.25" height="15" viewBox="0 0 5 10"><path d="M0.5 0.5L4.3 5 0.5 9.5" stroke="#b0b0b0" fill="none" stroke-width="1"/></svg>
<div style="left:84.94px;top:1001.25px;width:1.03px;height:28.12px;background:#cbcbcb"></div>
<svg style="left:101.62px;top:1010.06px;" width="13.88" height="13.88" viewBox="0 0 10 10"><path d="M5 0v10M0 5h10" stroke="#444" stroke-width="1.3"/></svg>
<svg style="left:130.88px;top:1009.88px;" width="13.12" height="14.25" viewBox="0 0 10 10"><path d="M0 1h10M0 3.7h10M0 6.3h10M0 9h10" stroke="#444" stroke-width="1"/></svg>
<div style="left:160.5px;top:1001.25px;width:1.03px;height:28.12px;background:#cbcbcb"></div>
<div style="left:161.06px;top:1001.06px;width:120.94px;height:28.12px;border-right:1px solid #cbcbcb"></div>
<div style="left:161.06px;top:1001.06px;width:120.94px;height:5.25px;background:#0fa84f"></div>
<div style="font-size:13.74px;line-height:19.24px;color:#a5a5a5;white-space:nowrap;left:161.06px;width:120.94px;text-align:center;top:1005.13px;height:19.24px;">Basic features</div>
<div style="left:282px;top:1001.06px;width:130.31px;height:28.12px;border-right:1px solid #cbcbcb"></div>
<div style="left:282px;top:1001.06px;width:130.31px;height:5.25px;background:#30a0c1"></div>
<div style="font-size:13.74px;line-height:19.24px;color:#a5a5a5;white-space:nowrap;left:282px;width:130.31px;text-align:center;top:1005.13px;height:19.24px;">Chart examples</div>
<div style="left:412.31px;top:1001.06px;width:107.25px;height:28.12px;border-right:1px solid #cbcbcb"></div>
<div style="left:412.31px;top:1001.06px;width:107.25px;height:5.25px;background:#e0232a"></div>
<div style="font-size:13.74px;line-height:19.24px;color:#a5a5a5;white-space:nowrap;left:412.31px;width:107.25px;text-align:center;top:1005.13px;height:19.24px;">Pivot Tables</div>
<div style="left:519.56px;top:1001.06px;width:143.44px;height:28.12px;background:#fff;border-right:1px solid #cbcbcb"></div>
<div style="left:519.56px;top:1001.06px;width:143.44px;height:5.25px;background:#474a85"></div>
<div style="font-size:13.74px;line-height:19.24px;color:#3a3a3a;white-space:nowrap;font-weight:bold;left:519.56px;width:143.44px;text-align:center;top:1005.13px;height:19.24px;">Modern Formulas</div>
<div style="left:663px;top:1001.06px;width:167.62px;height:28.12px;border-right:1px solid #cbcbcb"></div>
<div style="left:663px;top:1001.06px;width:167.62px;height:5.25px;background:#7d3a4f"></div>
<div style="font-size:13.74px;line-height:19.24px;color:#a5a5a5;white-space:nowrap;left:663px;width:167.62px;text-align:center;top:1005.13px;height:19.24px;">Graphics and images</div>
<svg style="left:1716.56px;top:1015.5px;" width="14.06" height="1.88" viewBox="0 0 10 1"><path d="M0 .5h10" stroke="#444" stroke-width="1"/></svg>
<div style="font-size:13.74px;line-height:19.24px;color:#444444;white-space:nowrap;font-weight:bold;left:1734px;width:112.5px;text-align:center;top:1007.19px;height:19.24px;">Zoom 100%</div>
<svg style="left:1849.69px;top:1009.31px;" width="14.06" height="14.06" viewBox="0 0 10 10"><path d="M5 0v10M0 5h10" stroke="#444" stroke-width="1.1"/></svg>
<div style="left:0px;top:1029px;width:60px;height:7.5px;background:#1f2329"></div>
<div style="left:60px;top:1029px;width:360px;height:7.5px;background:#f3f3f3"></div>
<div style="left:420px;top:1029px;width:1500px;height:7.5px;background:#1f2329"></div>
<div style="left:1594.88px;top:188.72px;width:275.62px;height:811.88px;background:#f1f1f1;border-left:1px solid #cbcbcb"></div>
<div style="left:1870.12px;top:188.72px;width:49.88px;height:811.88px;background:#f1f1f1;border-left:1px solid #cbcbcb"></div>
<div style="font-size:13.74px;line-height:19.24px;color:#444444;white-space:nowrap;font-weight:bold;left:1614.94px;top:195.88px;height:19.24px;">Fill</div>
<div style="left:1615.12px;top:216.19px;width:241.88px;height:27.19px;background:#fff;border:1px solid #cfcfcf;border-radius:1px"></div>
<div style="font-size:13.74px;line-height:19.24px;color:#444444;white-space:nowrap;left:1619.25px;top:220.44px;height:19.24px;">No Fill</div>
<svg style="left:1842.94px;top:227.62px;" width="7.88" height="5.62" viewBox="0 0 8 5"><path d="M1 1l3 3 3-3" stroke="#3a3a3a" fill="none" stroke-width="1.75"/></svg>
<div style="left:1615.12px;top:253.5px;width:241.88px;height:1.03px;background:#cbcbcb"></div>
<div style="font-size:13.74px;line-height:19.24px;color:#444444;white-space:nowrap;font-weight:bold;left:1614.94px;top:263.38px;height:19.24px;">Borders Style</div>
<div style="left:1615.12px;top:293.25px;width:115.69px;height:27.19px;background:#fff;border:1px solid #cfcfcf;border-radius:1px"></div>
<div style="left:1627.12px;top:306px;width:75.94px;height:1.69px;background:#333"></div>
<svg style="left:1717.12px;top:304.31px;" width="7.88" height="5.62" viewBox="0 0 8 5"><path d="M1 1l3 3 3-3" stroke="#3a3a3a" fill="none" stroke-width="1.75"/></svg>
<div style="font-size:13.74px;line-height:19.24px;color:#444444;white-space:nowrap;left:1761.56px;top:296.75px;height:19.24px;">Color</div>
<div style="left:1802.25px;top:293.25px;width:54.75px;height:27.19px;background:#fff;border:1px solid #cfcfcf;border-radius:1px"></div>
<div style="left:1803.38px;top:295.31px;width:40.12px;height:23.44px;background:#000"></div>
<svg style="left:1845.75px;top:304.31px;" width="7.88" height="5.62" viewBox="0 0 8 5"><path d="M1 1l3 3 3-3" stroke="#3a3a3a" fill="none" stroke-width="1.75"/></svg>
<div style="font-size:13.74px;line-height:19.24px;color:#444444;white-space:nowrap;left:1614.94px;top:329.38px;height:19.24px;">Select borders you want to change</div>
<div style="font-size:13.74px;line-height:19.24px;color:#444444;white-space:nowrap;left:1614.94px;top:348.13px;height:19.24px;">applying style chosen above</div>
<svg style="left:1619.25px;top:382.88px;" width="16.12" height="16.12" viewBox="0 0 14 14"><rect x="1" y="1" width="12" height="12" fill="none" stroke="#4a4a4a" stroke-width="1.15"/><path d="M7 1v12M1 7h12" stroke="#4a4a4a" stroke-width="1.15"/></svg>
<svg style="left:1649.44px;top:382.88px;" width="16.12" height="16.12" viewBox="0 0 14 14"><rect x="1" y="1" width="12" height="12" fill="none" stroke="#c4c4c4" stroke-width="0.9"/><path d="M7 1v12M1 7h12" stroke="#c4c4c4" stroke-width="0.9" fill="none"/></svg>
<svg style="left:1679.63px;top:382.88px;" width="16.12" height="16.12" viewBox="0 0 14 14"><rect x="1" y="1" width="12" height="12" fill="none" stroke="#c4c4c4" stroke-width="0.9"/><path d="M7 1v12M1 7h12" stroke="#4a4a4a" stroke-width="1.15"/></svg>
<svg style="left:1709.81px;top:382.88px;" width="16.12" height="16.12" viewBox="0 0 14 14"><path d="M7 1v12M1 7h12" stroke="#c4c4c4" stroke-width="0.9"/><rect x="1" y="1" width="12" height="12" fill="none" stroke="#4a4a4a" stroke-width="1.15"/></svg>
<svg style="left:1740px;top:382.88px;" width="16.12" height="16.12" viewBox="0 0 14 14"><rect x="1" y="1" width="12" height="12" fill="none" stroke="#c4c4c4" stroke-width="0.9"/><path d="M1 13L13 1" stroke="#4a4a4a" stroke-width="1"/></svg>
<svg style="left:1770.19px;top:382.88px;" width="16.12" height="16.12" viewBox="0 0 14 14"><rect x="1" y="1" width="12" height="12" fill="none" stroke="#c4c4c4" stroke-width="0.9"/><path d="M1 1L13 13" stroke="#4a4a4a" stroke-width="1"/></svg>
<svg style="left:1619.25px;top:418.69px;" width="16.12" height="16.12" viewBox="0 0 14 14"><rect x="1" y="1" width="12" height="12" fill="none" stroke="#c4c4c4" stroke-width="0.9"/><path d="M7 1v12M1 7h12" stroke="#c4c4c4" stroke-width="0.9" fill="none"/><path d="M1 0.5v13" stroke="#4a4a4a" stroke-width="1.05"/></svg>
<svg style="left:1649.44px;top:418.69px;" width="16.12" height="16.12" viewBox="0 0 14 14"><rect x="1" y="1" width="12" height="12" fill="none" stroke="#c4c4c4" stroke-width="0.9"/><path d="M7 1v12M1 7h12" stroke="#c4c4c4" stroke-width="0.9" fill="none"/><path d="M7 0.5v13" stroke="#4a4a4a" stroke-width="1.05"/></svg>
<svg style="left:1679.63px;top:418.69px;" width="16.12" height="16.12" viewBox="0 0 14 14"><rect x="1" y="1" width="12" height="12" fill="none" stroke="#c4c4c4" stroke-width="0.9"/><path d="M7 1v12M1 7h12" stroke="#c4c4c4" stroke-width="0.9" fill="none"/><path d="M13 0.5v13" stroke="#4a4a4a" stroke-width="1.05"/></svg>
<svg style="left:1709.81px;top:418.69px;" width="16.12" height="16.12" viewBox="0 0 14 14"><rect x="1" y="1" width="12" height="12" fill="none" stroke="#c4c4c4" stroke-width="0.9"/><path d="M7 1v12M1 7h12" stroke="#c4c4c4" stroke-width="0.9" fill="none"/><path d="M0.5 1h13" stroke="#4a4a4a" stroke-width="1.05"/></svg>
<svg style="left:1740px;top:418.69px;" width="16.12" height="16.12" viewBox="0 0 14 14"><rect x="1" y="1" width="12" height="12" fill="none" stroke="#c4c4c4" stroke-width="0.9"/><path d="M7 1v12M1 7h12" stroke="#c4c4c4" stroke-width="0.9" fill="none"/><path d="M0.5 7h13" stroke="#4a4a4a" stroke-width="1.05"/></svg>
<svg style="left:1770.19px;top:418.69px;" width="16.12" height="16.12" viewBox="0 0 14 14"><rect x="1" y="1" width="12" height="12" fill="none" stroke="#c4c4c4" stroke-width="0.9"/><path d="M7 1v12M1 7h12" stroke="#c4c4c4" stroke-width="0.9" fill="none"/><path d="M0.5 13h13" stroke="#4a4a4a" stroke-width="1.05"/></svg>
<div style="left:1615.12px;top:449.81px;width:241.88px;height:1.03px;background:#cbcbcb"></div>
<div style="font-size:13.74px;line-height:19.24px;color:#444444;white-space:nowrap;font-weight:bold;left:1614.94px;top:459.88px;height:19.24px;">Indent</div>
<div style="left:1615.12px;top:480.38px;width:75px;height:27.19px;background:#fff;border:1px solid #cfcfcf;border-radius:1px"></div>
<div style="font-size:13.74px;line-height:19.24px;color:#444444;white-space:nowrap;left:1610.25px;width:56.25px;text-align:right;top:484.63px;height:19.24px;">0</div>
<svg style="left:1674.19px;top:484.87px;" width="8.62" height="6.19" viewBox="0 0 8 5"><path d="M1 4l3-3 3 3" stroke="#444" fill="none" stroke-width="1.4"/></svg>
<svg style="left:1674.19px;top:497.44px;" width="8.62" height="6.19" viewBox="0 0 8 5"><path d="M1 1l3 3 3-3" stroke="#444" fill="none" stroke-width="1.4"/></svg>
<div style="font-size:13.74px;line-height:19.24px;color:#444444;white-space:nowrap;font-weight:bold;left:1614.94px;top:526.25px;height:19.24px;">Text Orientation</div>
<div style="font-size:13.74px;line-height:19.24px;color:#444444;white-space:nowrap;left:1614.94px;top:560.19px;height:19.24px;">Angle</div>
<div style="left:1660.12px;top:555.75px;width:75px;height:27.19px;background:#fff;border:1px solid #cfcfcf;border-radius:1px"></div>
<div style="font-size:13.74px;line-height:19.24px;color:#444444;white-space:nowrap;left:1655.25px;width:56.25px;text-align:right;top:560px;height:19.24px;">0 °</div>
<svg style="left:1719.19px;top:560.25px;" width="8.62" height="6.19" viewBox="0 0 8 5"><path d="M1 4l3-3 3 3" stroke="#444" fill="none" stroke-width="1.4"/></svg>
<svg style="left:1719.19px;top:572.81px;" width="8.62" height="6.19" viewBox="0 0 8 5"><path d="M1 1l3 3 3-3" stroke="#444" fill="none" stroke-width="1.4"/></svg>
<div style="font-size:13.74px;line-height:19.24px;color:#444444;white-space:nowrap;font-weight:bold;left:1614.94px;top:603.13px;height:19.24px;">Text Control</div>
<div style="left:1615.12px;top:631.88px;width:17.49px;height:17.49px;background:#fff;border:1px solid #c0c0c0;border-radius:2px"></div>
<svg style="left:1615.12px;top:631.88px;" width="17.49" height="17.49" viewBox="0 0 14 14"><path d="M3.3 7.1l2.7 2.7 4.9-5.6" stroke="#333" stroke-width="1.6" fill="none"/></svg>
<div style="font-size:13.74px;line-height:19.24px;color:#444444;white-space:nowrap;left:1642.31px;top:631.25px;height:19.24px;">Wrap text</div>
<div style="left:1615.12px;top:661.31px;width:17.49px;height:17.49px;background:#f4f4f4;border:1px solid #dcdcdc;border-radius:2px"></div>
<div style="font-size:13.74px;line-height:19.24px;color:#bdbdbd;white-space:nowrap;left:1642.31px;top:660.69px;height:19.24px;">Shrink to fit</div>
<div style="left:1615.12px;top:690.38px;width:241.88px;height:1.03px;background:#cbcbcb"></div>
<svg style="left:1612.5px;top:697.5px;" width="30" height="30" viewBox="860 372 16 16"><g stroke="#444" fill="none" stroke-width="0.75">
<rect x="862.3" y="376.3" width="8.4" height="8.2"/><path d="M862 376.9h9" stroke-width="1.5" stroke="#555"/>
<path d="M862.3 379.6h8.4M865.4 378v6.5" stroke-width="0.6"/>
<rect x="866.9" y="380.7" width="5.3" height="4.9" fill="#f1f1f1"/>
<path d="M868.7 381.9v2.6l2.1-1.3z" fill="#444" stroke="none"/></g></svg>
<div style="font-size:13.74px;line-height:19.24px;color:#444444;white-space:nowrap;left:1644.38px;top:704.19px;height:19.24px;">Conditional formatting</div>
<svg style="left:1785.38px;top:711.94px;" width="7.88" height="5.62" viewBox="0 0 8 5"><path d="M1 1l3 3 3-3" stroke="#3a3a3a" fill="none" stroke-width="1.75"/></svg>
<div style="left:1871.06px;top:208.12px;width:48.94px;height:36.38px;background:#7d858c"></div>
<svg style="left:1883.06px;top:213.75px;" width="24.99" height="24.99" viewBox="0 0 20 20"><g stroke="#fff" fill="none" stroke-width="1.3"><rect x="3.5" y="4.5" width="13" height="11"/><rect x="6.5" y="7.5" width="7" height="5" stroke-width="1"/><path d="M3.5 7.5h13M3.5 12.5h13" stroke-width="1"/></g></svg>
<svg style="left:1883.06px;top:261.38px;" width="24.99" height="24.99" viewBox="0 0 20 20"><g stroke="#adadad" fill="none" stroke-width="1.1"><rect x="3.5" y="4.5" width="13" height="11"/><path d="M3.5 8h13M3.5 11.7h13M7.8 4.5v11M12.2 4.5v11" stroke-width="1"/></g></svg>
<svg style="left:1883.06px;top:308.25px;" width="24.99" height="24.99" viewBox="0 0 20 20"><g stroke="#adadad" fill="none" stroke-width="1.1"><path d="M9 8.5H4.5v-5h7.5v3"/><circle cx="12" cy="12.5" r="4.6"/></g></svg>
<svg style="left:1883.06px;top:355.12px;" width="24.99" height="24.99" viewBox="0 0 20 20"><g stroke="#adadad" fill="none" stroke-width="1.1"><rect x="3.5" y="4.5" width="13" height="12"/><path d="M3.5 14l3.5-3.5 3 2.5 3-3.5 3.5 3.5" stroke-width="1"/><circle cx="7.5" cy="8" r="1" stroke-width="1"/></g></svg>
<svg style="left:1883.06px;top:402.94px;" width="24.99" height="24.99" viewBox="0 0 20 20"><g stroke="#adadad" fill="none" stroke-width="1.1"><rect x="3.5" y="12.5" width="3.3" height="4"/><rect x="8.3" y="9" width="3.3" height="7.5"/><rect x="13.2" y="4.5" width="3.3" height="12"/></g></svg>
<div style="font-size:17.62px;line-height:24.68px;color:#a8a8a8;white-space:nowrap;font-weight:bold;left:1876.88px;width:37.5px;text-align:center;top:448.91px;height:24.68px;">¶</div>
<div style="font-size:16.12px;line-height:22.57px;color:#a8a8a8;white-space:nowrap;left:1876.88px;width:37.5px;text-align:center;top:494.21px;height:22.57px;letter-spacing:-0.4px">Ta</div>
<svg style="left:1883.06px;top:498px;" width="24.99" height="24.99" viewBox="0 0 20 20"><g stroke="#adadad" fill="none" stroke-width="1.1"><path d="M5.5 17.5Q10 14 14.5 17.5" stroke-width="1"/></g></svg>
<svg style="left:1883.06px;top:544.88px;" width="24.99" height="24.99" viewBox="0 0 20 20"><g stroke="#adadad" fill="none" stroke-width="1.1"><rect x="3.5" y="3.5" width="4" height="4"/><path d="M10 5.5h7" stroke-dasharray="2 1.3"/><rect x="3.5" y="10.5" width="4" height="6"/><path d="M17 8v6h-6.5M12.5 12l-2 2 2 2" stroke-width="1"/></g></svg>
<svg style="left:1883.06px;top:592.5px;" width="24.99" height="24.99" viewBox="0 0 20 20"><g fill="#a8a8a8" stroke="none"><path d="M4 4h12v8H4z"/><path d="M4 13h8v3H4z" opacity=".6"/><path d="M13 13.5h5v1.3h-1.8V18h-1.4v-3.2H13z"/></g></svg>
<svg style="left:1883.06px;top:640.12px;" width="24.99" height="24.99" viewBox="0 0 20 20"><g stroke="#adadad" fill="none" stroke-width="1.1" stroke-width="1.1"><path d="M5 2.5Q3.5 7 5.5 10Q7 12.5 5.5 15.5Q4.5 17.5 3.8 15Q3.5 12 8.5 10"/><path d="M3 10.5l2.5-.8"/><path d="M14.5 4.5l2.4 1.6-5.4 9.4-2.6 1.3.2-2.9z"/></g></svg>
<div style="left:724.12px;top:281.25px;width:472.5px;height:507.94px;background:#fff;border-radius:6px;box-shadow:0 6px 17px rgba(0,0,0,.2),0 0 0 1px rgba(0,0,0,.17)"></div>
<div style="left:724.12px;top:281.25px;width:472.5px;height:42.38px;background:#f1f1f1;border-radius:6px 6px 0 0;border-bottom:1px solid #cbcbcb"></div>
<div style="font-size:15px;line-height:21px;color:#444444;white-space:nowrap;font-weight:bold;left:847.88px;width:225px;text-align:center;top:292.12px;height:21px;">Protect sheet</div>
<svg style="left:1166.62px;top:293.62px;" width="13.88" height="13.88" viewBox="0 0 10 10"><path d="M0.5 0.5l9 9M9.5 0.5l-9 9" stroke="#8a8a8a" stroke-width="1.05" fill="none"/></svg>
<div style="font-size:13.74px;line-height:19.24px;color:#444444;white-space:nowrap;left:742.5px;top:342.13px;height:19.24px;">Prevent unwanted changes from others by limiting their ability to edit.</div>
<div style="font-size:13.74px;line-height:19.24px;color:#444444;white-space:nowrap;left:742.5px;top:362.19px;height:19.24px;">You can unlock specific ranges for editing.</div>
<div style="left:742.5px;top:394.12px;width:131.81px;height:26.81px;background:#fff;border:1px solid #cfcfcf;border-radius:1px"></div>
<div style="font-size:13.74px;line-height:19.24px;color:#444444;white-space:nowrap;left:742.88px;width:131.25px;text-align:center;top:397.82px;height:19.24px;">Allow edit ranges</div>
<div style="font-size:13.74px;line-height:19.24px;color:#444444;white-space:nowrap;left:742.5px;top:439.07px;height:19.24px;">Password (optional)</div>
<div style="left:742.5px;top:460.03px;width:211.12px;height:26.44px;background:#fff;border:1px solid #cfcfcf;border-radius:1px"></div>
<div style="font-size:16.88px;line-height:23.62px;color:#3c3c3c;white-space:nowrap;left:747px;top:461.44px;height:23.62px;letter-spacing:0.19px">••••••••••</div>
<svg style="left:932.25px;top:467.25px;" width="16.88" height="12.38" viewBox="0 0 14 10"><g stroke="#444" fill="none" stroke-width="1"><path d="M1 5Q7 -1.5 13 5Q7 11.5 1 5z"/><circle cx="7" cy="5" r="1.7" fill="#444" stroke="none"/></g></svg>
<div style="font-size:13.74px;line-height:19.24px;color:#444444;white-space:nowrap;left:967.12px;top:439.07px;height:19.24px;">Repeat password</div>
<div style="left:966.75px;top:460.03px;width:211.12px;height:26.44px;background:#fff;border:1px solid #848484;border-radius:1px"></div>
<div style="font-size:16.88px;line-height:23.62px;color:#3c3c3c;white-space:nowrap;left:971.25px;top:461.44px;height:23.62px;letter-spacing:0.19px">••••••••••</div>
<div style="font-size:13.74px;line-height:19.24px;color:#b5b5b5;white-space:nowrap;left:742.5px;top:498.88px;height:19.24px;">Warning: If you lose or forget the password, it cannot be recovered.</div>
<div style="font-size:13.74px;line-height:19.24px;color:#b5b5b5;white-space:nowrap;left:742.5px;top:518.94px;height:19.24px;">Please keep it in a safe place.</div>
<div style="font-size:13.74px;line-height:19.24px;color:#444444;white-space:nowrap;left:742.5px;top:555.5px;height:19.24px;">Allow all users of this sheet to</div>
<div style="left:742.5px;top:577.88px;width:435.38px;height:143.81px;background:#fff;border:1px solid #cfcfcf;border-radius:1px;overflow:hidden"></div>
<div style="left:743.44px;top:606.38px;width:433.5px;height:1.03px;background:#dcdcdc"></div>
<div style="left:751.12px;top:583.88px;width:16.88px;height:16.88px;background:#fff;border:1px solid #c0c0c0;border-radius:2px"></div>
<svg style="left:751.12px;top:583.88px;" width="16.88" height="16.88" viewBox="0 0 14 14"><path d="M3.3 7.1l2.7 2.7 4.9-5.6" stroke="#333" stroke-width="1.6" fill="none"/></svg>
<div style="font-size:13.74px;line-height:19.24px;color:#444444;white-space:nowrap;left:775.88px;top:583.25px;height:19.24px;">Select locked cells</div>
<div style="left:743.44px;top:634.63px;width:433.5px;height:1.03px;background:#dcdcdc"></div>
<div style="left:751.12px;top:612.13px;width:16.88px;height:16.88px;background:#fff;border:1px solid #c0c0c0;border-radius:2px"></div>
<svg style="left:751.12px;top:612.13px;" width="16.88" height="16.88" viewBox="0 0 14 14"><path d="M3.3 7.1l2.7 2.7 4.9-5.6" stroke="#333" stroke-width="1.6" fill="none"/></svg>
<div style="font-size:13.74px;line-height:19.24px;color:#444444;white-space:nowrap;left:775.88px;top:611.51px;height:19.24px;">Select unlocked cells</div>
<div style="left:743.44px;top:662.89px;width:433.5px;height:1.03px;background:#dcdcdc"></div>
<div style="left:751.12px;top:640.39px;width:16.88px;height:16.88px;background:#fff;border:1px solid #c0c0c0;border-radius:2px"></div>
<div style="font-size:13.74px;line-height:19.24px;color:#444444;white-space:nowrap;left:775.88px;top:639.77px;height:19.24px;">Format cells</div>
<div style="left:743.44px;top:691.14px;width:433.5px;height:1.03px;background:#dcdcdc"></div>
<div style="left:751.12px;top:668.64px;width:16.88px;height:16.88px;background:#fff;border:1px solid #c0c0c0;border-radius:2px"></div>
<div style="font-size:13.74px;line-height:19.24px;color:#444444;white-space:nowrap;left:775.88px;top:668.02px;height:19.24px;">Format columns</div>
<div style="left:743.44px;top:719.4px;width:433.5px;height:1.03px;background:#dcdcdc"></div>
<div style="left:751.12px;top:696.9px;width:16.88px;height:16.88px;background:#fff;border:1px solid #c0c0c0;border-radius:2px"></div>
<div style="font-size:13.74px;line-height:19.24px;color:#444444;white-space:nowrap;left:775.88px;top:696.28px;height:19.24px;">Format rows</div>
<div style="left:1165.5px;top:580.5px;width:10.5px;height:51.19px;background:#f7f7f7;border:1px solid #cfcfcf;border-radius:1.5px"></div>
<div style="left:1168.88px;top:602.25px;width:3.94px;height:1.03px;background:#cfcfcf"></div>
<div style="left:1168.88px;top:604.26px;width:3.94px;height:1.03px;background:#cfcfcf"></div>
<div style="left:1168.88px;top:606.26px;width:3.94px;height:1.03px;background:#cfcfcf"></div>
<div style="left:1168.88px;top:608.27px;width:3.94px;height:1.03px;background:#cfcfcf"></div>
<div style="left:846px;top:742.5px;width:107.81px;height:26.06px;background:#7d858c;border-radius:1px"></div>
<div style="font-size:13.74px;line-height:19.24px;color:#fff;white-space:nowrap;font-weight:bold;left:846.56px;width:106.88px;text-align:center;top:746.19px;height:19.24px;">Protect</div>
<div style="left:966.19px;top:742.5px;width:107.81px;height:26.06px;background:#fff;border:1px solid #cfcfcf;border-radius:1px"></div>
<div style="font-size:13.74px;line-height:19.24px;color:#444444;white-space:nowrap;font-weight:bold;left:966.56px;width:106.88px;text-align:center;top:746.19px;height:19.24px;">Cancel</div>
</div></body></html>
